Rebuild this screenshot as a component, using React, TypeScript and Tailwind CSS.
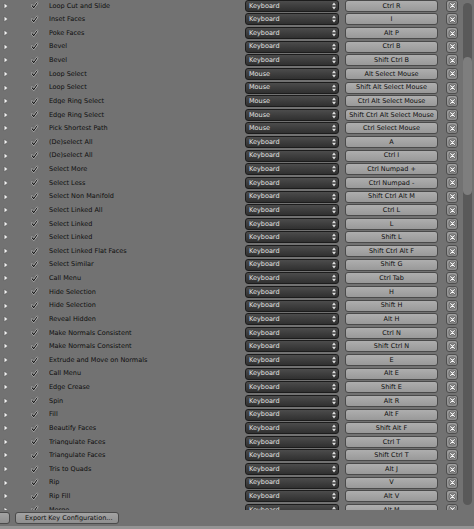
import React from "react";

type Item = [string, string, string];

const items: Item[] = [
  ["Loop Cut and Slide", "Keyboard", "Ctrl R"],
  ["Inset Faces", "Keyboard", "I"],
  ["Poke Faces", "Keyboard", "Alt P"],
  ["Bevel", "Keyboard", "Ctrl B"],
  ["Bevel", "Keyboard", "Shift Ctrl B"],
  ["Loop Select", "Mouse", "Alt Select Mouse"],
  ["Loop Select", "Mouse", "Shift Alt Select Mouse"],
  ["Edge Ring Select", "Mouse", "Ctrl Alt Select Mouse"],
  ["Edge Ring Select", "Mouse", "Shift Ctrl Alt Select Mouse"],
  ["Pick Shortest Path", "Mouse", "Ctrl Select Mouse"],
  ["(De)select All", "Keyboard", "A"],
  ["(De)select All", "Keyboard", "Ctrl I"],
  ["Select More", "Keyboard", "Ctrl Numpad +"],
  ["Select Less", "Keyboard", "Ctrl Numpad -"],
  ["Select Non Manifold", "Keyboard", "Shift Ctrl Alt M"],
  ["Select Linked All", "Keyboard", "Ctrl L"],
  ["Select Linked", "Keyboard", "L"],
  ["Select Linked", "Keyboard", "Shift L"],
  ["Select Linked Flat Faces", "Keyboard", "Shift Ctrl Alt F"],
  ["Select Similar", "Keyboard", "Shift G"],
  ["Call Menu", "Keyboard", "Ctrl Tab"],
  ["Hide Selection", "Keyboard", "H"],
  ["Hide Selection", "Keyboard", "Shift H"],
  ["Reveal Hidden", "Keyboard", "Alt H"],
  ["Make Normals Consistent", "Keyboard", "Ctrl N"],
  ["Make Normals Consistent", "Keyboard", "Shift Ctrl N"],
  ["Extrude and Move on Normals", "Keyboard", "E"],
  ["Call Menu", "Keyboard", "Alt E"],
  ["Edge Crease", "Keyboard", "Shift E"],
  ["Spin", "Keyboard", "Alt R"],
  ["Fill", "Keyboard", "Alt F"],
  ["Beautify Faces", "Keyboard", "Shift Alt F"],
  ["Triangulate Faces", "Keyboard", "Ctrl T"],
  ["Triangulate Faces", "Keyboard", "Shift Ctrl T"],
  ["Tris to Quads", "Keyboard", "Alt J"],
  ["Rip", "Keyboard", "V"],
  ["Rip Fill", "Keyboard", "Alt V"],
  ["Merge", "Keyboard", "Alt M"],
];

const font = { fontFamily: '"DejaVu Sans", "Liberation Sans", sans-serif' };

function Tri() {
  return (
    <svg width="6" height="8" viewBox="0 0 6 8">
      <polygon points="1.2,1.2 4.8,4 1.2,6.8" fill="#f4f4f4" stroke="#4a4a4a" strokeWidth="0.5" strokeLinejoin="round" />
    </svg>
  );
}

function Check() {
  return (
    <svg width="9" height="9" viewBox="0 0 9 9">
      <rect x="0.5" y="0.5" width="8" height="8" rx="1.5" fill="#6f6f6f" stroke="#787878" strokeWidth="0.4" />
      <path d="M2 4.6 L3.7 6.6 L7.2 1.8" fill="none" stroke="#e6e6e6" strokeWidth="2" strokeLinecap="round" strokeLinejoin="round" />
      <path d="M2 4.6 L3.7 6.6 L7.2 1.8" fill="none" stroke="#111" strokeWidth="1.1" strokeLinecap="round" strokeLinejoin="round" />
    </svg>
  );
}

function UpDown() {
  return (
    <svg width="4" height="8" viewBox="0 0 4 8">
      <polygon points="0,3.2 2,0.6 4,3.2" fill="#e0e0e0" />
      <polygon points="0,4.8 2,7.4 4,4.8" fill="#e0e0e0" />
    </svg>
  );
}

function XIcon() {
  return (
    <svg width="9" height="9" viewBox="0 0 9 9">
      <circle cx="4.5" cy="4.5" r="4" fill="#8a8a8a" stroke="#6a6a6a" strokeWidth="0.5" />
      <path d="M2.6 2.6 L6.4 6.4 M6.4 2.6 L2.6 6.4" stroke="#5a5a5a" strokeWidth="2.2" strokeLinecap="round" />
      <path d="M2.6 2.6 L6.4 6.4 M6.4 2.6 L2.6 6.4" stroke="#fafafa" strokeWidth="1.1" strokeLinecap="round" />
    </svg>
  );
}

function Row({ item }: { item: Item }) {
  const [name, kind, key] = item;
  return (
    <div className="flex h-[13.64px] shrink-0 items-center">
      <div className="flex w-[30px] pl-[3px]">
        <Tri />
      </div>
      <div className="flex w-[19px]">
        <Check />
      </div>
      <div className="w-[196px] truncate text-[6.5px] leading-none text-[#0d0d0d]">{name}</div>
      <div className="flex h-[12px] w-[94px] items-center justify-between rounded-[3px] border border-[#1c1c1c] bg-gradient-to-b from-[#4c4c4c] to-[#303030] pl-[3px] pr-[2px]">
        <span className="text-[6.5px] leading-none text-[#e2e2e2]">{kind}</span>
        <UpDown />
      </div>
      <div className="ml-[6px] flex h-[12px] w-[93px] items-center justify-center rounded-[3px] border border-[#4a4a4a] bg-gradient-to-b from-[#aeaeae] to-[#999999]">
        <span className="whitespace-nowrap text-[6.5px] leading-none text-[#0d0d0d]">{key}</span>
      </div>
      <div className="ml-[8px] flex h-[12px] w-[12px] items-center justify-center rounded-[3px] border border-[#4e4e4e] bg-gradient-to-b from-[#a0a0a0] to-[#8c8c8c]">
        <XIcon />
      </div>
    </div>
  );
}

export default function App() {
  return (
    <div className="flex h-[529px] w-[474px] flex-col overflow-hidden bg-[#727272]" style={font}>
      <div className="flex h-[510px] shrink-0 overflow-hidden">
        <div className="mt-[-1px] flex w-[463px] flex-col">
          {items.map((it, i) => (
            <Row key={i} item={it} />
          ))}
        </div>
        <div className="flex w-[9px] flex-col pt-[3px]">
          <div className="flex h-[502px] flex-col rounded-full bg-[#595959]">
            <div className="h-[54px]" />
            <div className="h-[138px] rounded-full bg-[#7e7e7e]" />
          </div>
        </div>
      </div>
      <div className="flex h-[16px] shrink-0 items-center">
        <div className="ml-[-4px] h-[12px] w-[14px] rounded-[3px] border border-[#4a4a4a] bg-gradient-to-b from-[#a3a3a3] to-[#8f8f8f]" />
        <div className="ml-[5px] flex h-[12px] w-[104px] items-center rounded-[3px] border border-[#4a4a4a] bg-gradient-to-b from-[#a3a3a3] to-[#8f8f8f] pl-[9px]">
          <span className="whitespace-nowrap text-[6.5px] leading-none text-[#0d0d0d]">Export Key Configuration...</span>
        </div>
      </div>
      <div className="h-[3px] shrink-0 bg-[#949494]" />
    </div>
  );
}
